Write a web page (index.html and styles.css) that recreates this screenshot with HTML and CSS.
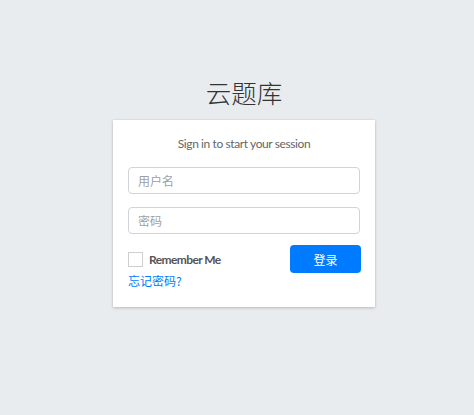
FILE: index.html
```html
<!DOCTYPE html>
<html lang="zh">
<head>
<meta charset="utf-8">
<title>云题库</title>
<link rel="stylesheet" href="styles.css">
</head>
<body>
<div class="page">
  <div class="logo">云题库</div>
  <div class="card">
    <p class="msg">Sign in to start your session</p>
    <form class="form">
      <input class="input" type="text" placeholder="用户名">
      <input class="input" type="password" placeholder="密码">
      <div class="row">
        <label class="remember"><span class="check"></span>Remember Me</label>
        <button class="btn" type="button">登录</button>
      </div>
    </form>
    <a class="link" href="#">忘记密码?</a>
  </div>
</div>
</body>
</html>
```
FILE: styles.css
```css
html, body {
  margin: 0;
  padding: 0;
  background: #e9ecef;
  height: 100%;
}
body {
  font-family: Lato, "Noto Sans CJK SC", sans-serif;
  color: #495057;
}
.page {
  display: flex;
  flex-direction: column;
  align-items: center;
  padding: 76px 0 0 14px;
}
.logo {
  font-family: "Noto Sans CJK SC", sans-serif;
  font-size: 25.5px;
  line-height: 32px;
  font-weight: 300;
  color: #333;
  margin-bottom: 12px;
}
.card {
  width: 262px;
  box-sizing: border-box;
  background: #fff;
  padding: 15px 15px 17px;
  box-shadow: 0 0 1px rgba(0,0,0,.125), 0 1px 3px rgba(0,0,0,.2);
}
.msg {
  margin: 0 0 14px;
  text-align: center;
  font-size: 12px;
  letter-spacing: -0.4px;
  line-height: 18px;
  color: #666;
}
.form {
  display: flex;
  flex-direction: column;
  margin: 0;
}
.input {
  height: 27px;
  box-sizing: border-box;
  border: 1px solid #ced4da;
  border-radius: 4px;
  padding: 0 9px;
  font-family: "Noto Sans CJK SC", sans-serif;
  font-size: 12px;
  color: #495057;
  outline: none;
  margin: 0 0 13px;
}
.input::placeholder {
  color: #a0a0a0;
}
.input + .input + .row { margin-top: -2px; }
.row {
  display: flex;
  justify-content: space-between;
  align-items: center;
}
.remember {
  display: flex;
  align-items: center;
  gap: 6px;
  font-size: 12px;
  letter-spacing: -0.6px;
  font-weight: 700;
  color: #555;
}
.check {
  width: 15px;
  height: 15px;
  box-sizing: border-box;
  border: 1px solid #cfcfcf;
  background: #fff;
}
.btn {
  width: 71px;
  height: 28px;
  margin-right: -1px;
  border: 0;
  border-radius: 4px;
  background: #007bff;
  color: #fff;
  font-family: "Noto Sans CJK SC", sans-serif;
  font-size: 12px;
}
.link {
  display: block;
  width: max-content;
  margin-top: -1px;
  font-family: "Noto Sans CJK SC", sans-serif;
  font-size: 12px;
  line-height: 18px;
  color: #007bff;
  text-decoration: none;
}
```
